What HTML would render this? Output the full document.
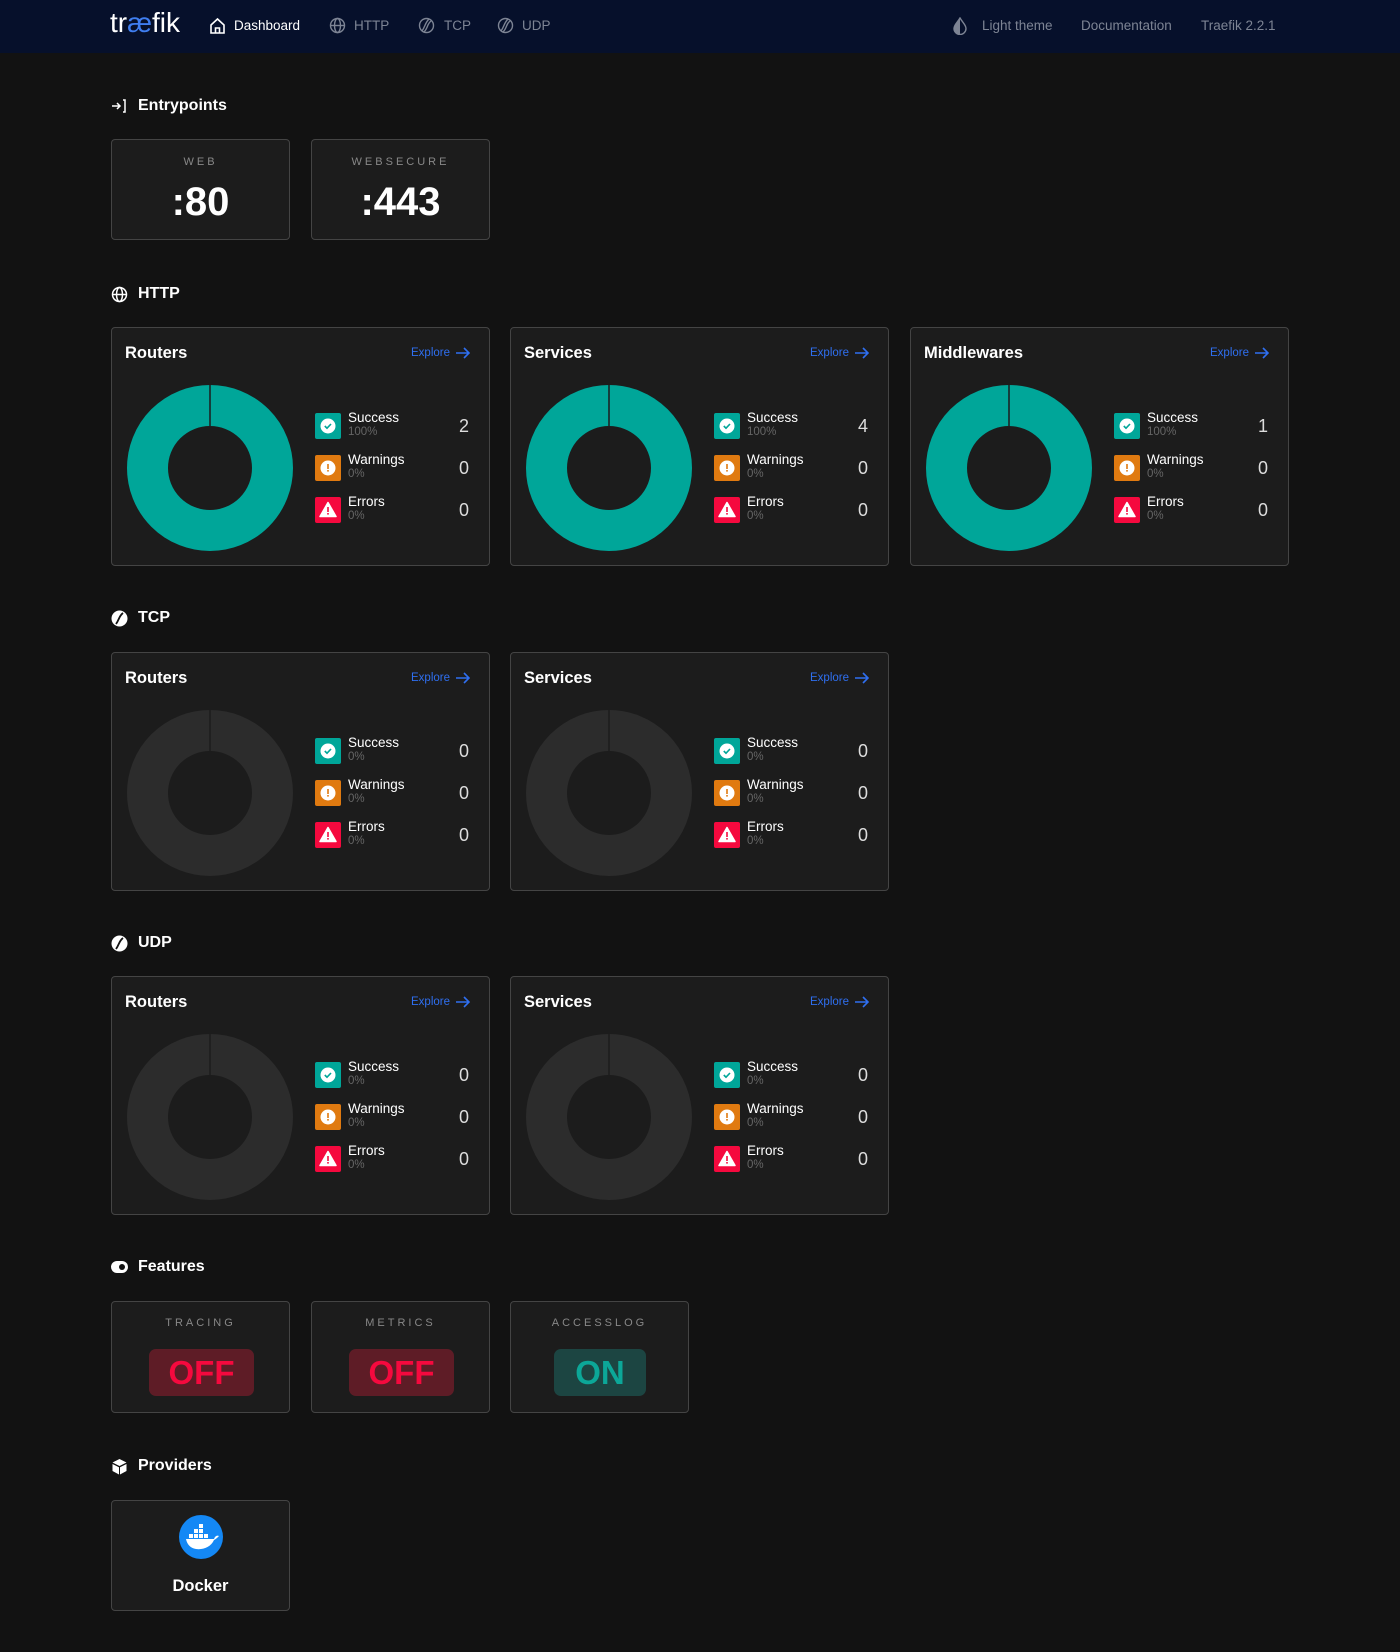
<!DOCTYPE html>
<html><head><meta charset="utf-8"><style>
*{box-sizing:border-box;margin:0;padding:0}
body{width:1400px;height:1652px;background:#121212;font-family:"Liberation Sans",sans-serif;color:#fff;position:relative;overflow:hidden}
.hdr{position:absolute;left:0;top:0;width:1400px;height:53px;background:#06102b}
.a{position:absolute}
.nav{font-size:13.5px;color:#7d8494;top:18px}
.sec{position:absolute;left:111px;font-size:16px;font-weight:bold;color:#fff}
.sec svg{position:absolute;left:0;top:2px}
.sec span{position:absolute;left:27px;top:1px;white-space:nowrap}
.card{position:absolute;background:#1c1c1c;border:1px solid #444;border-radius:4px}
.card .t{position:absolute;left:13px;top:16px;font-size:16.5px;font-weight:bold}
.card .ex{position:absolute;right:19px;top:19px;font-size:11.5px;color:#2f6ff0}
.card .ex svg{vertical-align:-3px;margin-left:6px}
.ic{position:absolute;left:203px;width:26px;height:26px;border-radius:2px}
.lb{position:absolute;left:236px;font-size:13.5px;line-height:15px}
.lb small{display:block;font-size:11.5px;color:#666}
.ct{position:absolute;right:20px;font-size:18px;color:#ddd}
.ep{position:absolute;top:139px;width:179px;height:101px;text-align:center}
.ep .k{margin-top:16px;font-size:11px;letter-spacing:3px;color:#888}
.ep .v{margin-top:12px;font-size:40px;font-weight:bold}
.ft{position:absolute;top:1301px;width:179px;height:112px;text-align:center}
.ft .k{margin-top:15px;font-size:11px;letter-spacing:3px;color:#888}
.badge{position:absolute;top:47px;height:47px;border-radius:7px;font-size:33px;line-height:47px;font-weight:600}
</style></head><body>
<div class="hdr"></div>
<div class="a" style="left:110px;top:7px;font-size:28px;color:#fff">tr<span style="color:#3f7ef0">æ</span>fik</div>
<svg class="a" style="left:209px;top:17px" width="17" height="17" viewBox="0 0 17 17" fill="none" stroke="#fff" stroke-width="1.6"><path d="M2 8L8.5 2 15 8V16H2Z M6.5 16V11H10.5V16"/></svg>
<div class="a nav" style="left:234px;color:#fff">Dashboard</div>
<svg class="a" style="left:329px;top:17px" width="17" height="17" viewBox="0 0 17 17" fill="none" stroke="#7d8494" stroke-width="1.4"><circle cx="8.5" cy="8.5" r="7"/><ellipse cx="8.5" cy="8.5" rx="3" ry="7"/><path d="M1.5 8.5H15.5"/></svg>
<div class="a nav" style="left:354px">HTTP</div>
<svg class="a" style="left:418px;top:17px" width="17" height="17" viewBox="0 0 17 17" fill="none" stroke="#7d8494" stroke-width="1.4"><circle cx="8.5" cy="8.5" r="7"/><path d="M4 14C7 10 7 6 11 2M6 15C10 11 9 7 13 4"/></svg>
<div class="a nav" style="left:444px">TCP</div>
<svg class="a" style="left:497px;top:17px" width="17" height="17" viewBox="0 0 17 17" fill="none" stroke="#7d8494" stroke-width="1.4"><circle cx="8.5" cy="8.5" r="7"/><path d="M4 14C7 10 7 6 11 2M6 15C10 11 9 7 13 4"/></svg>
<div class="a nav" style="left:522px">UDP</div>
<svg class="a" style="left:952px;top:17px" width="16" height="18" viewBox="0 0 16 18"><path d="M8 1C5 6 2 8 2 11.5A6 6 0 0 0 14 11.5C14 8 11 6 8 1Z" fill="none" stroke="#7d8494" stroke-width="1.4"/><path d="M8 1C5 6 2 8 2 11.5A6 6 0 0 0 8 17.5Z" fill="#7d8494"/></svg>
<div class="a nav" style="left:982px">Light theme</div>
<div class="a nav" style="left:1081px">Documentation</div>
<div class="a nav" style="left:1201px">Traefik 2.2.1</div>

<div class="sec" style="top:96px"><svg width="16" height="16" viewBox="0 0 16 16" fill="none" stroke="#fff" stroke-width="1.5"><path d="M1 8H9M6 5L9 8 6 11M12 2H14V14H12"/></svg><span>Entrypoints</span></div>
<div class="card ep" style="left:111px"><div class="k">WEB</div><div class="v">:80</div></div>
<div class="card ep" style="left:311px"><div class="k">WEBSECURE</div><div class="v">:443</div></div>

<div class="sec" style="top:284px"><svg width="17" height="17" viewBox="0 0 17 17" fill="none" stroke="#fff" stroke-width="1.5"><circle cx="8.5" cy="8.5" r="7"/><ellipse cx="8.5" cy="8.5" rx="3" ry="7"/><path d="M1.5 8.5H15.5"/></svg><span>HTTP</span></div>
<div class="sec" style="top:608px"><svg width="17" height="17" viewBox="0 0 17 17"><circle cx="8.5" cy="8.5" r="8" fill="#fff"/><path d="M5 14C8 10 8 6 12 3" stroke="#121212" stroke-width="1.8" fill="none"/></svg><span>TCP</span></div>
<div class="sec" style="top:933px"><svg width="17" height="17" viewBox="0 0 17 17"><circle cx="8.5" cy="8.5" r="8" fill="#fff"/><path d="M5 14C8 10 8 6 12 3" stroke="#121212" stroke-width="1.8" fill="none"/></svg><span>UDP</span></div>
<div class="sec" style="top:1257px"><svg width="17" height="17" viewBox="0 0 17 17"><rect x="0" y="2" width="17" height="12" rx="6" fill="#fff"/><circle cx="11" cy="8" r="3" fill="#121212"/></svg><span>Features</span></div>
<div class="sec" style="top:1456px"><svg width="17" height="17" viewBox="0 0 17 17"><path d="M8.5 1L15.5 4.5 8.5 8 1.5 4.5Z" fill="#fff"/><path d="M1.5 6L8 9.3V16.5L1.5 13Z M15.5 6L9 9.3V16.5L15.5 13Z" fill="#fff"/></svg><span>Providers</span></div>

<div id="cards"></div>

<div class="card ft" style="left:111px"><div class="k">TRACING</div><div class="badge" style="left:37px;width:105px;background:#5e1c26;color:#f5093e">OFF</div></div>
<div class="card ft" style="left:311px"><div class="k">METRICS</div><div class="badge" style="left:37px;width:105px;background:#5e1c26;color:#f5093e">OFF</div></div>
<div class="card ft" style="left:510px"><div class="k">ACCESSLOG</div><div class="badge" style="left:43px;width:92px;background:#1c4542;color:#0ca798">ON</div></div>

<div class="card" style="left:111px;top:1500px;width:179px;height:111px;text-align:center">
<svg class="a" style="left:67px;top:14px" width="44" height="44" viewBox="0 0 44 44"><circle cx="22" cy="22" r="22" fill="#1488f5"/><g fill="#fff"><rect x="10" y="19" width="4" height="4"/><rect x="15" y="19" width="4" height="4"/><rect x="20" y="19" width="4" height="4"/><rect x="25" y="19" width="4" height="4"/><rect x="15" y="14" width="4" height="4"/><rect x="20" y="14" width="4" height="4"/><rect x="20" y="9" width="4" height="4"/><path d="M7 24H35C36 21 38 20 40 21 38 23 37 24 35 25 32 32 24 35 17 34 11 33 8 29 7 24Z"/></g></svg>
<div class="a" style="left:0;width:100%;top:76px;font-size:16.5px;font-weight:bold">Docker</div></div>

<script>
const teal='#00a699',gray='#2c2c2c';
const cards=[
[111,327,'Routers',[2,0,0]],[510,327,'Services',[4,0,0]],[910,327,'Middlewares',[1,0,0]],
[111,652,'Routers',[0,0,0]],[510,652,'Services',[0,0,0]],
[111,976,'Routers',[0,0,0]],[510,976,'Services',[0,0,0]]];
let h='';
for(const [x,y,t,n] of cards){
 const ok=n[0]>0;
 h+=`<div class="card" style="left:${x}px;top:${y}px;width:379px;height:239px"><div class="t">${t}</div>
 <div class="ex">Explore<svg width="14" height="12" viewBox="0 0 14 12" fill="none" stroke="#2f6ff0" stroke-width="1.6"><path d="M0 6H13M8 1L13 6 8 11"/></svg></div>
 <svg class="a" style="left:14px;top:56px" width="168" height="168" viewBox="0 0 168 168"><circle cx="84" cy="84" r="62.5" fill="none" stroke="${ok?teal:gray}" stroke-width="41"/><line x1="84" y1="1" x2="84" y2="42" stroke="#1c1c1c" stroke-width="1.5"/></svg>`;
 const rows=[['Success',ok?'100%':'0%',teal,'<circle cx="13" cy="13" r="7.5" fill="#fff"/><path d="M9.8 13L12 15.2 16 11" stroke="'+teal+'" stroke-width="1.6" fill="none"/>'],
 ['Warnings','0%','#e07a10','<circle cx="13" cy="13" r="7.5" fill="#fff"/><rect x="12.2" y="9" width="1.6" height="5" fill="#e07a10"/><rect x="12.2" y="15" width="1.6" height="1.6" fill="#e07a10"/>'],
 ['Errors','0%','#f5093e','<path d="M13 5.5L21 19.5H5Z" fill="#fff" stroke="#fff" stroke-linejoin="round" stroke-width="1.5"/><rect x="12.2" y="10" width="1.6" height="5" fill="#f5093e"/><rect x="12.2" y="16" width="1.6" height="1.6" fill="#f5093e"/>']];
 rows.forEach((r,i)=>{const ty=85+i*42;
  h+=`<svg class="ic" style="top:${ty}px;background:${r[2]}" viewBox="0 0 26 26">${r[3]}</svg>
  <div class="lb" style="top:${ty-3}px">${r[0]}<small>${r[1]}</small></div>
  <div class="ct" style="top:${ty+3}px">${n[i]}</div>`;});
 h+='</div>';
}
document.getElementById('cards').innerHTML=h;
</script>
</body></html>
